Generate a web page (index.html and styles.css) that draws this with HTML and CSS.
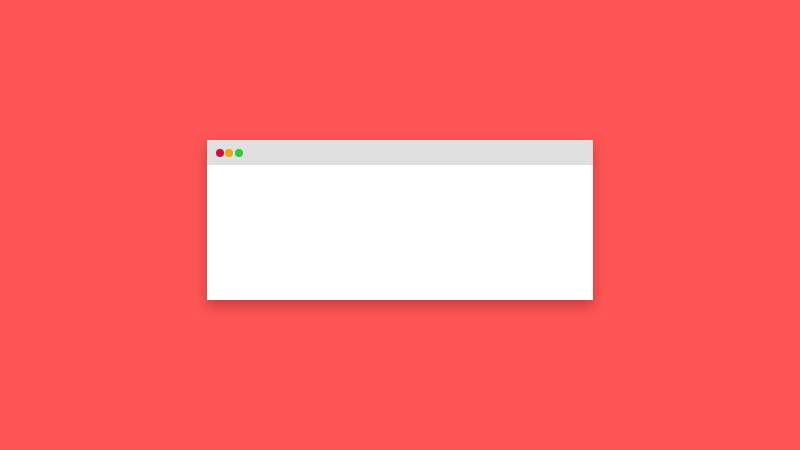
FILE: index.html
```html
<!DOCTYPE html>
<html lang="en">
<head>
    <meta charset="UTF-8">
    <meta name="viewport" content="width=device-width, initial-scale=1.0">
    <title>Window</title>
    <link rel="stylesheet" href="styles.css">
</head>
<body>
    <div class="stage">
        <div class="window">
            <div class="titlebar">
                <span class="dot close"></span>
                <span class="dot minimize"></span>
                <span class="dot zoom"></span>
            </div>
            <div class="content"></div>
        </div>
    </div>
</body>
</html>
```

FILE: styles.css
```css
* {
    margin: 0;
    padding: 0;
    box-sizing: border-box;
}

body {
    background: #ff5555;
    font-family: 'Liberation Sans', Arial, sans-serif;
    overflow: hidden;
}

.stage {
    height: 100vh;
    display: flex;
    align-items: center;
    justify-content: center;
    padding-bottom: 10px;
}

.window {
    width: 386px;
    height: 160px;
    background: #fff;
    display: flex;
    flex-direction: column;
    box-shadow: 0 6px 12px rgba(90, 20, 20, 0.35);
}

.titlebar {
    height: 25px;
    background: #e0e0e0;
    display: flex;
    align-items: center;
    gap: 1px;
    padding-left: 9px;
}

.dot {
    width: 8px;
    height: 8px;
    border-radius: 50%;
    margin-right: 0.3px;
}

.dot.close {
    background: #c8103f;
}

.dot.minimize {
    background: #f5a11c;
}

.dot.zoom {
    background: #2ec93a;
}

.content {
    flex: 1;
}
```
